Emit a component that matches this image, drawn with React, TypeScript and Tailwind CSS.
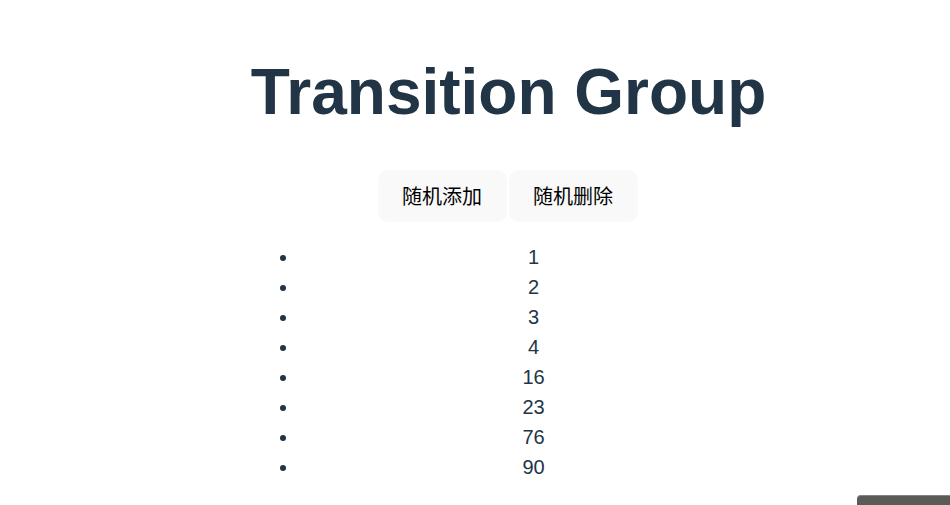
import React from "react";

export default function App() {
  const items = [1, 2, 3, 4, 16, 23, 76, 90];
  return (
    <div
      className="relative min-h-screen w-full overflow-hidden bg-white text-[#213547]"
      style={{ fontFamily: '"Liberation Sans", Arial, "Noto Sans CJK SC", sans-serif' }}
    >
      <div className="pl-[249px] pt-[57px]">
        <div className="w-[519px] text-center">
          <h1 className="m-0 mb-[43px] text-[64px] font-bold leading-[70.4px]">Transition Group</h1>
          <div className="flex justify-center gap-[2px] pr-[2px]">
            <button
              className="h-[52px] w-[129px] rounded-[10px] border border-transparent bg-[#f9f9f9] text-[20px] text-black"
              style={{ fontFamily: '"Noto Sans CJK SC", sans-serif' }}
            >
              随机添加
            </button>
            <button
              className="h-[52px] w-[129px] rounded-[10px] border border-transparent bg-[#f9f9f9] text-[20px] text-black"
              style={{ fontFamily: '"Noto Sans CJK SC", sans-serif' }}
            >
              随机删除
            </button>
          </div>
          <ul className="mt-[20px] list-disc pl-[50px] text-[20px] leading-[30px]">
            {items.map((n) => (
              <li key={n}>{n}</li>
            ))}
          </ul>
        </div>
      </div>
      <div className="absolute bottom-0 right-0 h-[10px] w-[93px] rounded-tl-[4px] border-t border-[#85867f] bg-[#5b5c57]" />
    </div>
  );
}
